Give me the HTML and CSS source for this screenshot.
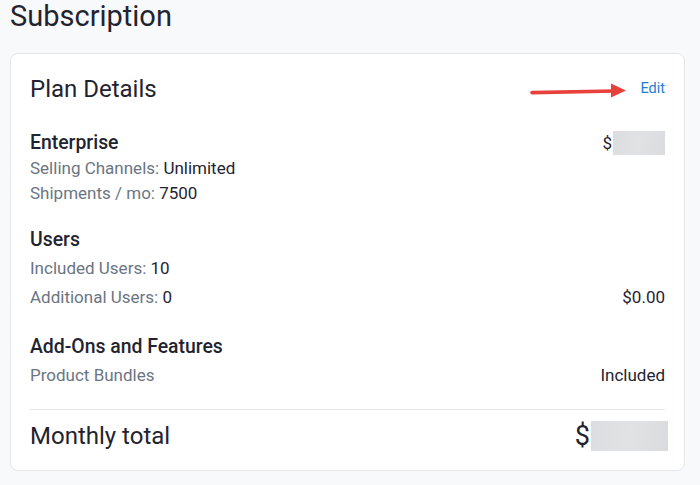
FILE: index.html
```html
<!DOCTYPE html>
<html lang="en">
<head>
<meta charset="utf-8">
<title>Subscription</title>
<link rel="stylesheet" href="styles.css">
</head>
<body>
<div class="page">
  <h1 class="title">Subscription</h1>
  <div class="card">
    <div class="card-head">
      <h2 class="card-title">Plan Details</h2>
      <div class="head-actions">
        <svg class="arrow" width="98" height="16" viewBox="0 0 98 16" aria-hidden="true">
          <line x1="3" y1="9.6" x2="86" y2="8" stroke="#e8403b" stroke-width="3.6" stroke-linecap="round"/>
          <polygon points="82,0.5 97,7.6 82,14.5" fill="#e8403b"/>
        </svg>
        <a class="edit" href="#">Edit</a>
      </div>
    </div>

    <section class="sec sec-plan">
      <div class="row">
        <span class="sec-title">Enterprise</span>
        <span class="price"><span class="cur">$</span><span class="mask mask-sm"></span></span>
      </div>
      <div class="line"><span class="lbl">Selling Channels:</span> <span class="val">Unlimited</span></div>
      <div class="line"><span class="lbl">Shipments / mo:</span> <span class="val">7500</span></div>
    </section>

    <section class="sec sec-users">
      <div class="sec-title sec-title-b">Users</div>
      <div class="row row-t"><span><span class="lbl">Included Users:</span> <span class="val">10</span></span></div>
      <div class="row row-t"><span><span class="lbl">Additional Users:</span> <span class="val">0</span></span><span class="val">$0.00</span></div>
    </section>

    <section class="sec">
      <div class="sec-title sec-title-b">Add-Ons and Features</div>
      <div class="row row-t"><span class="lbl">Product Bundles</span><span class="val">Included</span></div>
    </section>

    <div class="total">
      <span class="total-label">Monthly total</span>
      <span class="total-price"><span class="cur-lg">$</span><span class="mask mask-lg"></span></span>
    </div>
  </div>
</div>
</body>
</html>
```

FILE: styles.css
```css
* { box-sizing: border-box; }
html, body {
  margin: 0;
  padding: 0;
  background: #f8f9fb;
  font-family: Roboto, "Liberation Sans", Arial, sans-serif;
  color: #1f2430;
}
.page {
  padding: 0 15px 0 10px;
}
.title {
  margin: 0;
  font-size: 29px;
  font-weight: 400;
  line-height: 32px;
  color: #1f2430;
  height: 53px;
  padding-top: 0;
}
.card {
  background: #fff;
  border: 1px solid #e4e6ea;
  border-radius: 8px;
  padding: 20px 19px 19px 19px;
  width: 675px;
}
.card-head {
  display: flex;
  align-items: center;
  justify-content: space-between;
  height: 30px;
}
.card-title {
  margin: 0;
  font-size: 24px;
  font-weight: 400;
  line-height: 30px;
  color: #1f2430;
}
.head-actions {
  display: flex;
  align-items: center;
  gap: 13px;
}
.arrow {
  display: block;
  margin-top: 3px;
}
.edit {
  color: #1f7ed0;
  text-decoration: none;
  font-size: 14.5px;
  line-height: 20px;
  margin-top: -1px;
}
.sec { margin-top: 21px; }
.sec-plan { margin-top: 26px; }
.sec-users { margin-top: 20px; }
.row {
  display: flex;
  justify-content: space-between;
  align-items: center;
}
.sec-title {
  font-size: 19.4px;
  font-weight: 500;
  line-height: 26px;
  color: #1f2430;
}
.sec-title-b { line-height: 28px; }
.line {
  font-size: 17px;
  line-height: 25px;
}
.row-t {
  font-size: 17px;
  line-height: 29px;
}
.lbl { color: #6b7582; }
.val { color: #1f2430; }
.price {
  display: flex;
  align-items: center;
  font-size: 17px;
}
.cur { color: #1f2430; }
.mask {
  display: inline-block;
  background: linear-gradient(100deg, #dcdde0, #e1e2e4 50%, #dadbde);
}
.mask-sm { width: 52px; height: 24px; margin-left: 1px; }
.total {
  margin-top: 19px;
  border-top: 1px solid #e6e8eb;
  padding-top: 11px;
  display: flex;
  justify-content: space-between;
  align-items: center;
  margin-right: 0;
}
.total-label {
  font-size: 24px;
  line-height: 30px;
  color: #1f2430;
}
.total-price {
  display: flex;
  align-items: center;
  margin-right: -3px;
}
.cur-lg { font-size: 27px; line-height: 30px; color: #1f2430; }
.mask-lg { width: 77px; height: 30px; margin-left: 1px; }
```
